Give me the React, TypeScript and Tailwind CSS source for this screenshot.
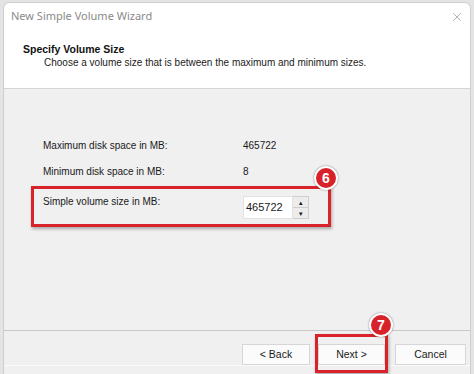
import { X } from "lucide-react";

function Badge({ n, className }: { n: string; className: string }) {
  return (
    <div
      className={`absolute flex h-[24px] w-[24px] items-center justify-center rounded-full border-2 border-white bg-[#d7222a] text-[14px] font-bold leading-none text-white shadow-[0_0_2px_rgba(0,0,0,0.5)] ${className}`}
    >
      {n}
    </div>
  );
}

function WinButton({ label, w }: { label: string; w: string }) {
  return (
    <button className={`h-[21px] border border-[#d6d6d6] bg-[#fbfbfb] text-[10.5px] text-[#1a1a1a] ${w}`}>
      {label}
    </button>
  );
}

export default function App() {
  return (
    <div
      className="h-[374px] w-[474px] overflow-hidden bg-[#e4e4e4] pl-[3px] pr-[3px] pt-[2px]"
      style={{ fontFamily: '"Liberation Sans", Arial, sans-serif' }}
    >
      <div className="flex h-[380px] flex-col rounded-tl-[6px] rounded-tr-[6px] border border-[#cfcfcf] bg-[#f0f0f0]">
        {/* title bar */}
        <div className="flex h-[27px] items-center justify-between rounded-t-[6px] bg-white pl-[7px] pr-[6px]">
          <span
            className="text-[11px] text-[#8a8a8a]"
            style={{ fontFamily: '"Noto Sans", "Open Sans", sans-serif' }}
          >
            New Simple Volume Wizard
          </span>
          <X className="h-[14px] w-[14px] text-[#9a9a9a]" strokeWidth={1.3} />
        </div>

        {/* header */}
        <div className="h-[59px] border-b border-[#d4d4d4] bg-white pl-[19px] pt-[12px]">
          <div className="text-[10.5px] font-bold leading-[14px] text-[#111]">Specify Volume Size</div>
          <div className="pl-[21px] text-[10px] leading-[14px] text-[#222]">
            Choose a volume size that is between the maximum and minimum sizes.
          </div>
        </div>

        {/* body */}
        <div className="flex flex-1 flex-col text-[10px] text-[#1a1a1a]">
          <div className="h-[241px] pt-[43px]">
            <div className="flex h-[26px] items-center pl-[39px]">
              <span className="w-[200px]">Maximum disk space in MB:</span>
              <span>465722</span>
            </div>
            <div className="flex h-[26px] items-center pl-[39px]">
              <span className="w-[200px]">Minimum disk space in MB:</span>
              <span>8</span>
            </div>
            <div className="relative ml-[27px] mt-[2px] flex h-[41px] w-[300px] border-[3px] border-[#d8232a] pl-[9px] pt-[5px] shadow-[1px_2px_3px_rgba(0,0,0,0.3)]">
              <span className="w-[200px]">Simple volume size in MB:</span>
              <div className="mt-[2px] flex h-[23px]">
                <div className="flex w-[50px] items-center border border-[#e2e2e2] bg-white pl-[2px] text-[11px]">
                  465722
                </div>
                <div className="flex w-[16px] flex-col border border-l-0 border-[#cfcfcf] bg-[#ececec]">
                  <div className="flex flex-1 items-center justify-center border-b border-[#cfcfcf] text-[7px] leading-none">▴</div>
                  <div className="flex flex-1 items-center justify-center text-[7px] leading-none">▾</div>
                </div>
              </div>
              <Badge n="6" className="-right-[10px] -top-[23px]" />
            </div>
          </div>

          {/* footer */}
          <div className="border-t border-[#c8c8c8] shadow-[0_1px_0_#fafafa]">
            <div className="flex justify-end pr-[4px] pt-[13px]">
              <WinButton label="< Back" w="w-[68px]" />
              <div className="relative ml-[8px]">
                <WinButton label="Next >" w="w-[67px]" />
                <div className="absolute -bottom-[8px] -left-[3px] -right-[3px] -top-[10px] border-[3px] border-[#d8232a] shadow-[1px_2px_3px_rgba(0,0,0,0.3)]" />
                <Badge n="7" className="-right-[8px] -top-[31px]" />
              </div>
              <div className="ml-[10px]">
                <WinButton label="Cancel" w="w-[71px]" />
              </div>
            </div>
          </div>
        </div>
      </div>
    </div>
  );
}
